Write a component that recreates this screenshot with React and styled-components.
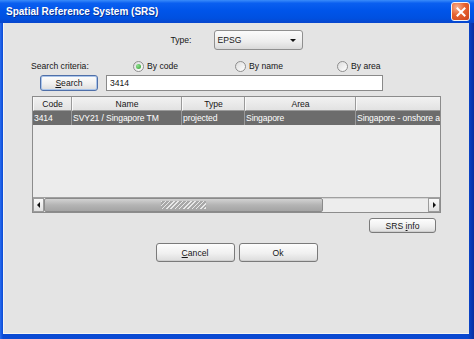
import React from "react"
import styled, {createGlobalStyle} from "styled-components"

const GlobalStyle = createGlobalStyle`
  html, body {
    margin: 0;
    padding: 0;
    background: #e4e4e4;
  }
  body {
    font-family: "Liberation Sans", Arial, sans-serif;
    font-size: 8.6px;
    color: #161616;
  }
`;

const Window = styled.div`
  width: 474px;
  height: 339px;
  display: flex;
  flex-direction: column;
  background: linear-gradient(90deg, #2a6cf0 0px, #0a4ad4 3px, #0a48d0 468px, #0b2f9e 474px);
  overflow: hidden;
`;

const TitleBar = styled.div`
  height: 23px;
  flex: none;
  display: flex;
  align-items: center;
  justify-content: space-between;
  padding: 0 4px 0 6px;
  background: linear-gradient(#3a8cfa 0%, #0a5ff0 14%, #0055ea 45%, #0050e0 80%, #0846cc 100%);
  color: white;
  font-weight: bold;
  font-size: 10px;
  text-shadow: 1px 1px 0 #0b3496;
`;

const CloseButton = styled.div`
  width: 17px;
  height: 17px;
  border: 1px solid #f4f4f4;
  border-radius: 3px;
  background: radial-gradient(circle at 30% 25%, #f8b090 0%, #e6622e 45%, #cc421a 100%);
  display: grid;
  place-items: center;
`;

const Body = styled.div`
  flex: 1;
  margin: 0 5px 5px 3px;
  background: #e4e4e4;
  border-left: 1px solid #f4f4f4;
  border-bottom: 1px solid #f4f4f4;
  display: flex;
  flex-direction: column;
`;

const TypeRow = styled.div`
  margin-top: 7px;
  height: 20px;
  display: flex;
  align-items: center;
  justify-content: center;
  gap: 22px;
`;

const Combo = styled.div`
  width: 78px;
  height: 18px;
  border: 1px solid #8f8f8f;
  border-radius: 3px;
  background: linear-gradient(#fbfbfb, #ededed 60%, #d9d9d9);
  display: flex;
  align-items: center;
  justify-content: space-between;
  padding: 0 6px 0 3px;
`;

const CriteriaRow = styled.div`
  margin-top: 9px;
  height: 14px;
  padding-left: 27px;
  display: grid;
  grid-template-columns: repeat(4, 102px);
  align-items: center;
`;

const RadioItem = styled.label`
  display: flex;
  align-items: center;
  gap: 3px;
`;

const RadioCircle = styled.span`
  width: 11px;
  height: 11px;
  box-sizing: border-box;
  border-radius: 50%;
  border: 1px solid #8e8e8e;
  background: linear-gradient(135deg, #dcdcdc, #ffffff);
  display: grid;
  place-items: center;
  &::after {
    content: "";
    width: 5px;
    height: 5px;
    border-radius: 50%;
    background: ${({checked}) => checked ? "radial-gradient(circle at 35% 35%, #8fe08f, #2f9e2f)" : "transparent"};
  }
`;

const SearchRow = styled.div`
  margin-top: 2px;
  height: 16px;
  padding-left: 36px;
  display: flex;
  gap: 8px;
`;

const Button = styled.div`
  width: ${({w}) => w}px;
  height: ${({h}) => h}px;
  box-sizing: border-box;
  border: 1px solid ${({focus}) => focus ? "#4f6fa8" : "#7a7a7a"};
  border-radius: 3px;
  background: linear-gradient(#fdfdfd, #f0f0f0 55%, #dcdcdc);
  box-shadow: ${({focus}) => focus ? "inset 0 0 0 1px #a9c4ea" : "inset 0 -1px 0 #cfcfcf"};
  display: flex;
  align-items: center;
  justify-content: center;
  color: #161616;
`;

const TextInput = styled.div`
  width: 277px;
  height: 16px;
  box-sizing: border-box;
  border: 1px solid #8a8a8a;
  background: white;
  padding-left: 3px;
  display: flex;
  align-items: center;
`;

const Table = styled.div`
  margin: 5px 0 0 28px;
  width: 409px;
  height: 117px;
  box-sizing: border-box;
  border: 1px solid #8c8c8c;
  background: #ececec;
  display: flex;
  flex-direction: column;
`;

const Row = styled.div`
  height: 14px;
  flex: none;
  display: grid;
  grid-template-columns: 39px 110px 63px 111px 84px;
  background: ${({selected}) => selected ? "#6c6c6c" : "transparent"};
  color: ${({selected}) => selected ? "#ffffff" : "#161616"};
`;

const HeadCell = styled.div`
  border-right: 1px solid #9a9a9a;
  border-bottom: 1px solid #9a9a9a;
  border-left: 1px solid #fafafa;
  background: linear-gradient(#f2f2f2, #e2e2e2);
  display: flex;
  align-items: center;
  justify-content: center;
  &:last-child { border-right: none; }
`;

const Cell = styled.div`
  padding-left: 1px;
  letter-spacing: -0.1px;
  white-space: nowrap;
  overflow: hidden;
  display: flex;
  align-items: center;
  border-right: 1px solid #9a9a9a;
  &:last-child { border-right: none; }
`;

const Filler = styled.div`
  flex: 1;
`;

const ScrollBar = styled.div`
  height: 14px;
  flex: none;
  display: grid;
  grid-template-columns: 11px 279px 1fr 12px;
  border-top: 1px solid #a0a0a0;
`;

const ArrowButton = styled.div`
  background: linear-gradient(#fafafa, #e0e0e0);
  border: 1px solid #9c9c9c;
  display: grid;
  place-items: center;
`;

const Thumb = styled.div`
  background: linear-gradient(#d2d2d2, #b4b4b4 50%, #a4a4a4);
  border: 1px solid #8a8a8a;
  border-radius: 2px;
  display: grid;
  place-items: center;
`;

const Grip = styled.div`
  width: 45px;
  height: 8px;
  background: repeating-linear-gradient(135deg, #e8e8e8 0 1px, #a8a8a8 1px 3px);
`;

const Track = styled.div`
  background: #ededed;
  border-top: 1px solid #d4d4d4;
`;

const InfoRow = styled.div`
  margin-top: 5px;
  display: flex;
  justify-content: flex-end;
  padding-right: 33px;
`;

const ActionRow = styled.div`
  margin-top: 10px;
  display: flex;
  justify-content: center;
  gap: 4px;
`;

function Radio({checked, children}) {
    return (
        <RadioItem>
            <RadioCircle checked={checked}/>
            {children}
        </RadioItem>
    );
}

const columns = ["Code", "Name", "Type", "Area", ""];
const rows = [
    ["3414", "SVY21 / Singapore TM", "projected", "Singapore", "Singapore - onshore a"]
];

export default function App() {
    return (
        <>
        <GlobalStyle/>
        <Window>
            <TitleBar>
                <span>Spatial Reference System (SRS)</span>
                <CloseButton>
                    <svg width="10" height="10" viewBox="0 0 10 10">
                        <path d="M1.5 1.5 L8.5 8.5 M8.5 1.5 L1.5 8.5" stroke="white" strokeWidth="2" strokeLinecap="square"/>
                    </svg>
                </CloseButton>
            </TitleBar>
            <Body>
                <TypeRow>
                    <span>Type:</span>
                    <Combo>
                        <span>EPSG</span>
                        <svg width="6" height="3" viewBox="0 0 6 3">
                            <path d="M0 0 H6 L3 3 Z" fill="#111"/>
                        </svg>
                    </Combo>
                </TypeRow>
                <CriteriaRow>
                    <span>Search criteria:</span>
                    <Radio checked>By code</Radio>
                    <Radio>By name</Radio>
                    <Radio>By area</Radio>
                </CriteriaRow>
                <SearchRow>
                    <Button w={58} h={16} focus><span><u>S</u>earch</span></Button>
                    <TextInput>3414</TextInput>
                </SearchRow>
                <Table>
                    <Row>
                        {columns.map((c, i) => <HeadCell key={i}>{c}</HeadCell>)}
                    </Row>
                    {rows.map((r, i) => (
                        <Row key={i} selected>
                            {r.map((v, j) => <Cell key={j}>{v}</Cell>)}
                        </Row>
                    ))}
                    <Filler/>
                    <ScrollBar>
                        <ArrowButton>
                            <svg width="3" height="6" viewBox="0 0 3 6"><path d="M3 0 V6 L0 3 Z" fill="#111"/></svg>
                        </ArrowButton>
                        <Thumb><Grip/></Thumb>
                        <Track/>
                        <ArrowButton>
                            <svg width="3" height="6" viewBox="0 0 3 6"><path d="M0 0 V6 L3 3 Z" fill="#111"/></svg>
                        </ArrowButton>
                    </ScrollBar>
                </Table>
                <InfoRow>
                    <Button w={67} h={15}><span>SRS <u>i</u>nfo</span></Button>
                </InfoRow>
                <ActionRow>
                    <Button w={79} h={19}><span><u>C</u>ancel</span></Button>
                    <Button w={79} h={19}><span>Ok</span></Button>
                </ActionRow>
            </Body>
        </Window>
        </>
    );
}
